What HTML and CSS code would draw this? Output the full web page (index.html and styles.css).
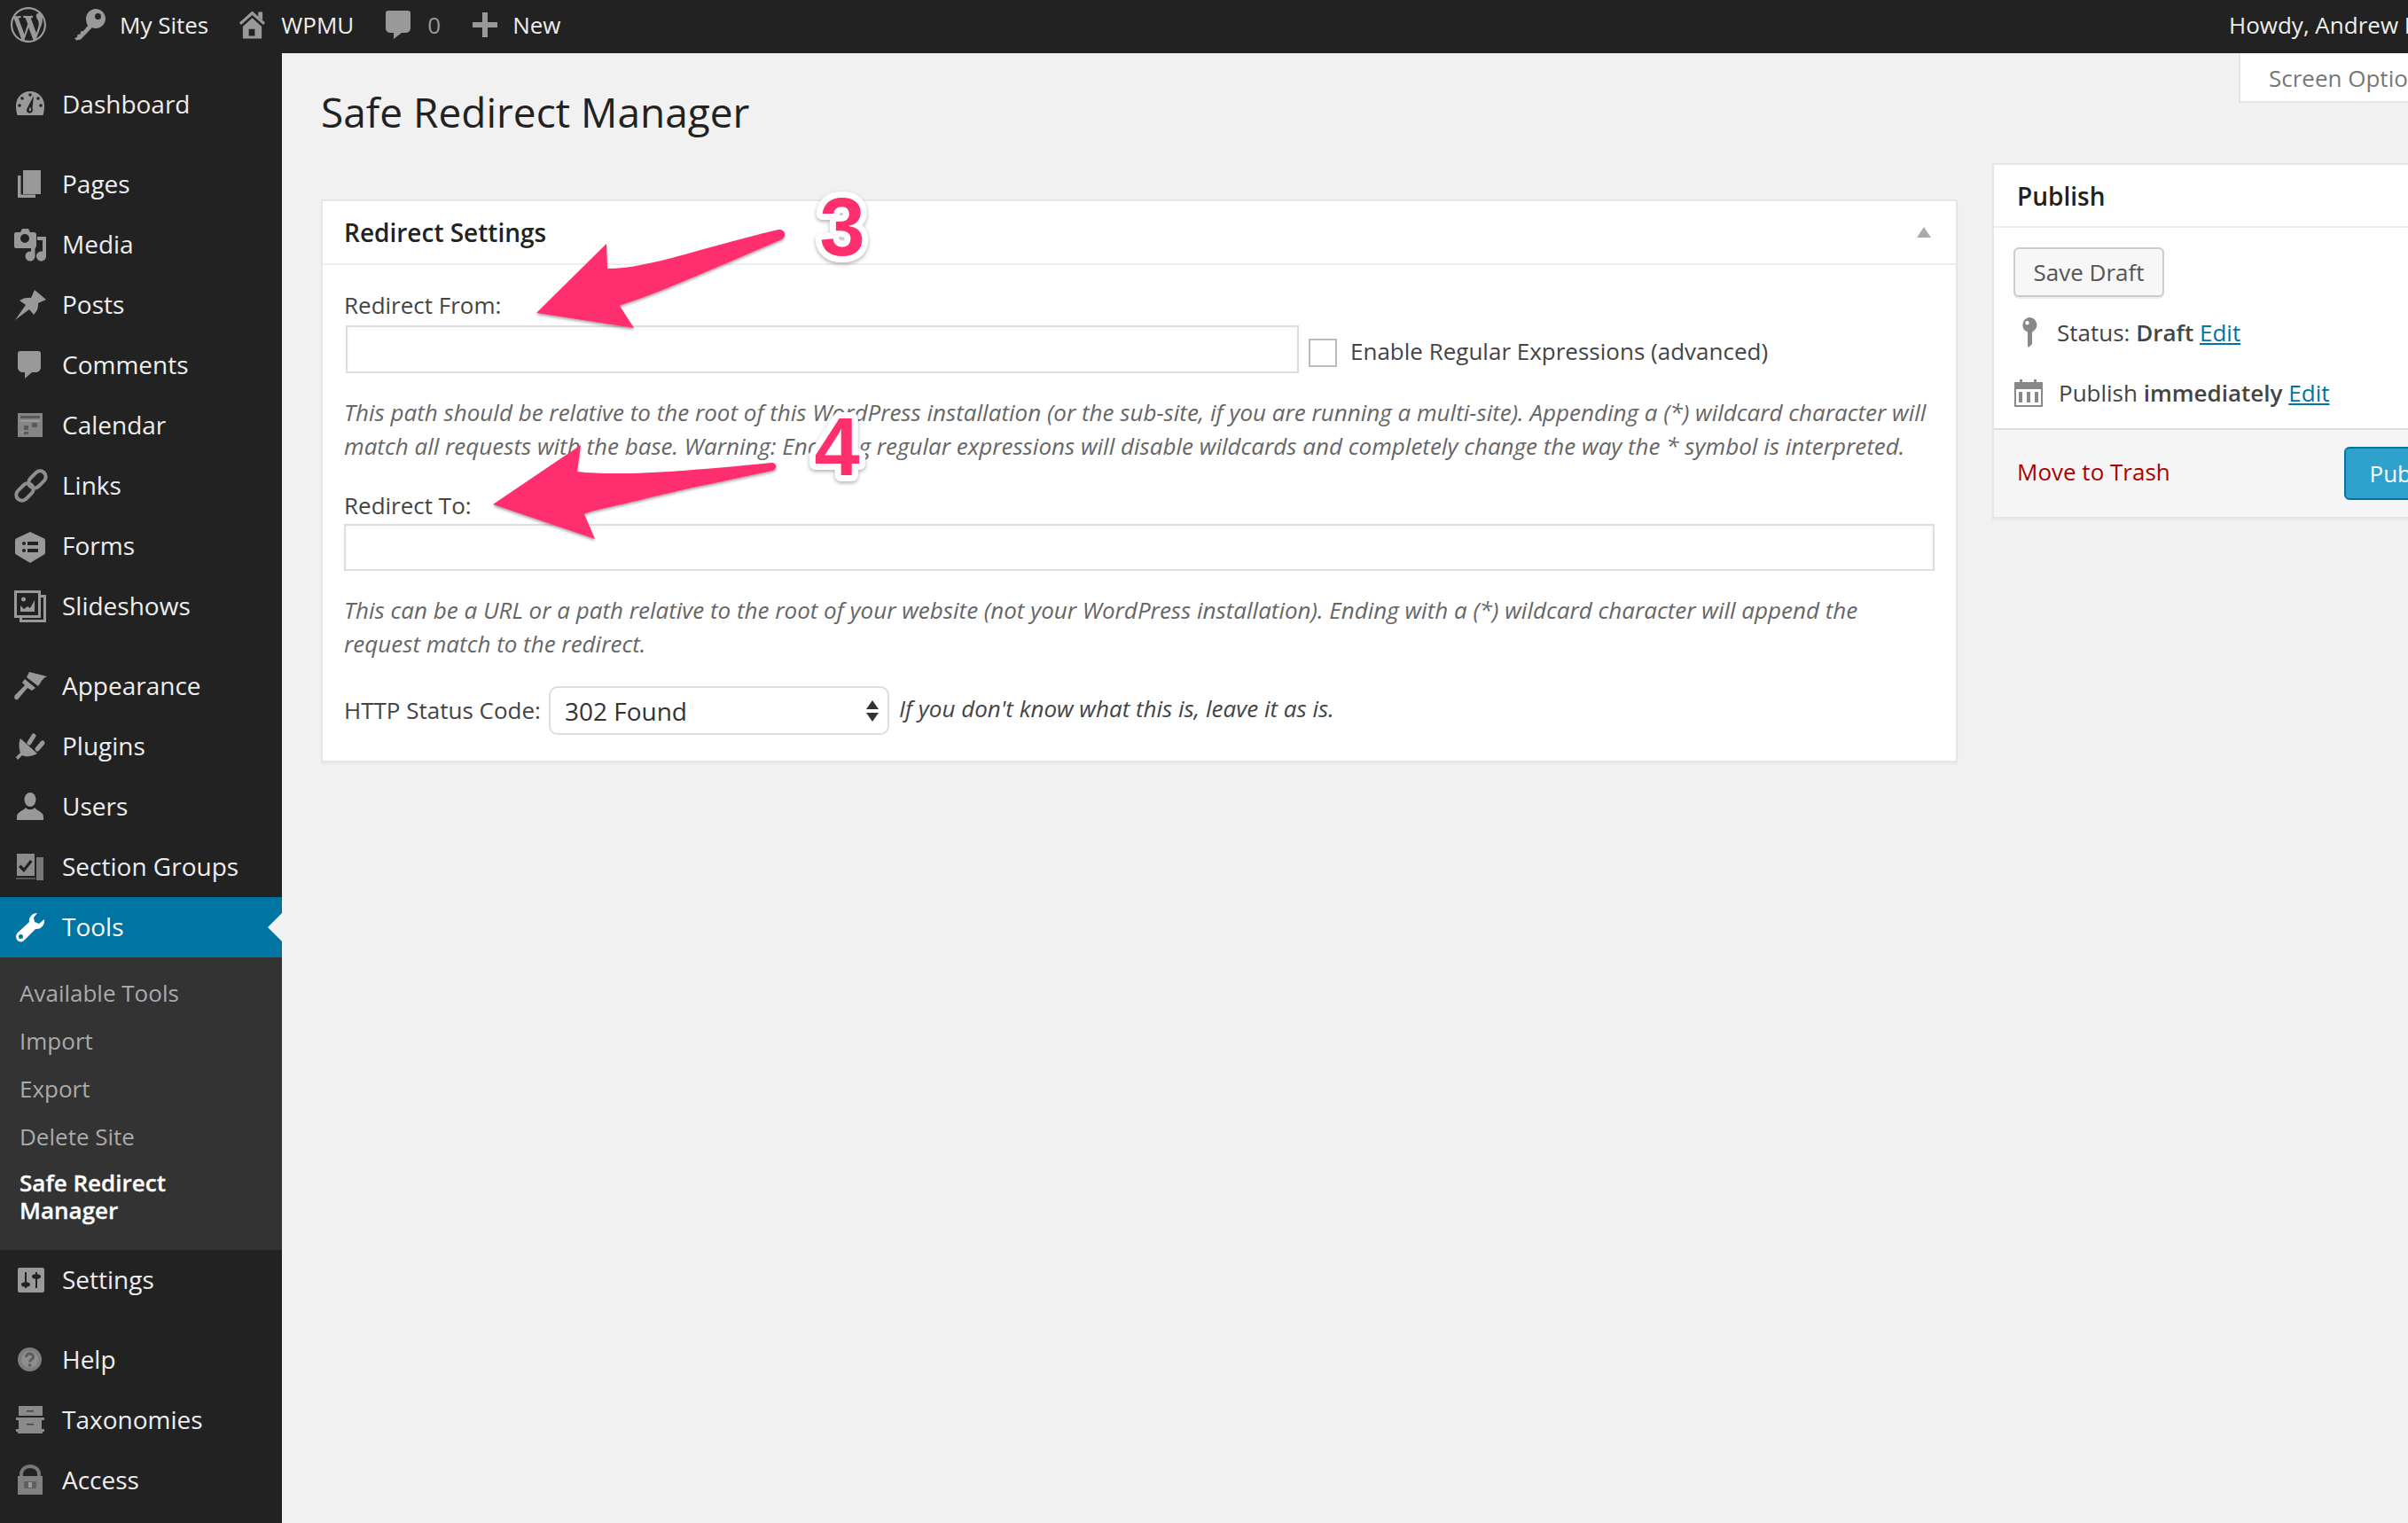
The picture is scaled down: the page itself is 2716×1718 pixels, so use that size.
FILE: index.html
```html
<!DOCTYPE html>
<html lang="en">
<head>
<meta charset="utf-8">
<title>Safe Redirect Manager</title>
<link rel="stylesheet" href="styles.css">
</head>
<body>
<header class="adminbar">
  <svg class="ab-wp" viewBox="0 0 20 20"><path fill="#999" d="M20 10c0-5.510-4.490-10-10-10C4.480 0 0 4.490 0 10c0 5.520 4.480 10 10 10 5.510 0 10-4.480 10-10zM7.780 15.370L4.370 6.220c.55-.02 1.170-.08 1.170-.08.5-.06.44-1.130-.06-1.110 0 0-1.450.11-2.370.11-.18 0-.37 0-.58-.01C4.120 2.690 6.870 1.110 10 1.110c2.330 0 4.450.87 6.050 2.340-.68-.11-1.650.39-1.650 1.580 0 .74.45 1.360.9 2.100.35.61.55 1.360.55 2.460 0 1.490-1.400 5-1.400 5l-3.030-8.370c.54-.02.82-.17.82-.17.5-.05.44-1.250-.06-1.220 0 0-1.440.12-2.380.12-.87 0-2.330-.12-2.330-.12-.5-.03-.56 1.200-.06 1.220l.92.08 1.260 3.410zM17.410 10c.24-.64.74-1.870.43-4.250.7 1.290 1.050 2.710 1.050 4.250 0 3.290-1.730 6.240-4.400 7.780.97-2.590 1.940-5.200 2.920-7.780zM6.100 18.090C3.120 16.650 1.110 13.530 1.110 10c0-1.300.23-2.480.72-3.590C3.250 10.300 4.670 14.200 6.100 18.090zm4.030-6.630l2.580 6.980c-.86.29-1.760.45-2.710.45-.79 0-1.570-.11-2.290-.33.81-2.380 1.620-4.740 2.420-7.100z"/></svg>
  <svg class="ab-ico ab-key" viewBox="0 0 36 36"><path fill="#999" d="M24 0c6 0 11 5 11 11s-5 11-11 11c-1.500 0-3-.3-4-1L7 34.500l-5 1L0 33l3-1 .5-3 3-.5.500-3 3-.5 5-6C13.500 16 13 13 13 11 13 5 18 0 24 0zm2.500 5a3.500 3.500 0 1 0 0 7 3.500 3.500 0 0 0 0-7z"/></svg>
  <a class="ab-text ab-sites">My Sites</a>
  <svg class="ab-ico ab-home" viewBox="0 0 30 32"><path fill="#999" fill-rule="evenodd" d="M15 0L30 13.500 28 16 15 4.500 2 16 0 13.500zM22 1h5v10l-5-4.500zM4 18L15 8l11 10v14H4zM11 21v8h7v-8z"/></svg>
  <a class="ab-text ab-wpmu">WPMU</a>
  <svg class="ab-ico ab-cmt" viewBox="0 0 28 32"><path fill="#999" d="M3 0h22a3 3 0 0 1 3 3v17c0 3-2.500 5-6 5h-4l-9 7v-7H6c-3.500 0-6-2-6-5V3a3 3 0 0 1 3-3z"/></svg>
  <span class="ab-zero">0</span>
  <svg class="ab-ico ab-plus" viewBox="0 0 28 28"><path fill="#999" d="M11 0h6v11h11v6H17v11h-6V17H0v-6h11z"/></svg>
  <a class="ab-text ab-new">New</a>
  <a class="ab-text ab-howdy">Howdy, Andrew Norcross</a>
</header>

<div class="layout">
  <nav class="sidebar">
    <ul class="menu">
      <li class="item"><svg class="ico" viewBox="0 0 40 40"><path d="M19 5C10 5 3 12 3 21c0 4 .5 8 1.500 11h29c1-3 1.500-7 1.500-11 0-9-7-16-16-16z"/><g fill="#222"><circle cx="19" cy="9" r="1.800"/><circle cx="10" cy="13" r="1.800"/><circle cx="28" cy="13" r="1.800"/><circle cx="7" cy="21" r="1.800"/><circle cx="31" cy="21" r="1.800"/><path d="M23 10l-1.500 14c1 2 .5 5-2.500 5.500s-5-2.500-3.500-5z"/></g><path d="M19.500 23l-1 .2-.9 3c0 1.500 2.300 1.500 2.500 0z"/></svg><span>Dashboard</span></li>
      <li class="item gap"><svg class="ico" viewBox="0 0 40 40"><path d="M11 4h20v27H11z"/><path d="M5 10h3.500v21.500H25V35H5z"/></svg><span>Pages</span></li>
      <li class="item"><svg class="ico" viewBox="0 0 40 40"><path fill-rule="evenodd" d="M3 6h5l2-4h7l2 4h4c2 0 3 1 3 3v12c0 2-1 3-3 3H3c-1.500 0-2-1-2-3V9c0-2 .5-3 2-3zm10 2a5 5 0 1 0 0 10 5 5 0 0 0 0-10z"/><path d="M27 11h10v22c0 3-2.500 5.500-5.500 5.500S26 36 26 33s2.500-5.500 5.500-5.500c.5 0 1 0 1.500.2V15h-6z"/><circle cx="19" cy="33" r="5.500"/><path d="M20 22h4.500v11H20z"/></svg><span>Media</span></li>
      <li class="item"><svg class="ico" viewBox="0 0 40 40"><path d="M24 3L37 14 28 18Q29 25 23 31L18 25 2 37 14 20 7 15Q13 11 20 12z"/></svg><span>Posts</span></li>
      <li class="item"><svg class="ico" viewBox="0 0 40 40"><path d="M8 4h20a3 3 0 0 1 3 3v15c0 4-3 6-6 6h-4l-8 7v-7h-2c-3 0-6-2-6-6V7a3 3 0 0 1 3-3z"/></svg><span>Comments</span></li>
      <li class="item"><svg class="ico" viewBox="0 0 40 40"><path fill="#858585" d="M5 6h28v27H5z"/><g fill="#5a5a5a"><path d="M8 9h22v3H8z"/><path d="M12 20h5v5h-5zM21 17h6v5h-6zM12 27h5v3h-5z"/></g><path fill="#a0a0a0" d="M8 14h22v1.500H8zM8 27h4v1H8z"/></svg><span>Calendar</span></li>
      <li class="item"><svg class="ico" viewBox="0 0 40 40"><g fill="none" stroke="#8f8f8f" stroke-width="4"><rect x="-11" y="-6.500" width="22" height="13" rx="6.500" transform="translate(27 13) rotate(-45)"/><rect x="-11" y="-6.500" width="22" height="13" rx="6.500" transform="translate(13 27) rotate(-45)"/></g></svg><span>Links</span></li>
      <li class="item"><svg class="ico" viewBox="0 0 40 40"><path d="M19 4l15 7c1.500.7 2 1.500 2 3v13c0 1.500-.5 2.300-2 3l-15 9-15-9c-1.500-.7-2-1.500-2-3V14c0-1.500.5-2.300 2-3z"/><g fill="#222"><circle cx="12" cy="17" r="2"/><circle cx="12" cy="25" r="2"/><path d="M16 15h12v4H16zM16 23h12v4H16z"/></g></svg><span>Forms</span></li>
      <li class="item"><svg class="ico" viewBox="0 0 40 40"><path fill-rule="evenodd" d="M1 2h30v5h6v31H7v-5H1zM4 5v25h24V5zM31 10v23H10v2h24V10z"/><path d="M6 7h20v21H6z" fill="#222"/><path d="M8 26v-7l4 4 4-3 3 2 5-9v13z" fill="#999"/><circle cx="11.500" cy="12" r="2.500" fill="#999"/></svg><span>Slideshows</span></li>
      <li class="item gap"><svg class="ico" viewBox="0 0 40 40"><path d="M18 4L38 9C33 11 31 16 28 20L15 10z"/><path d="M13 12L25 22 21 25 16 22 5 35C2 36 0 33 2 30L13 19 10 16z"/></svg><span>Appearance</span></li>
      <li class="item"><svg class="ico" viewBox="0 0 40 40"><path d="M8 11L27 28C20 32 14 32 10 30L5 35 3 32 8 27C6 22 6 15 8 11z"/><path d="M18 16L23 8M27 23L33 16" stroke="#999" stroke-width="5" stroke-linecap="round" fill="none"/></svg><span>Plugins</span></li>
      <li class="item"><svg class="ico" viewBox="0 0 40 40"><ellipse cx="19" cy="12" rx="6.500" ry="8"/><path d="M4 35v-4c0-5 8-7 10-10 2 3 8 3 10 0 2 3 10 5 10 10v4z"/></svg><span>Users</span></li>
      <li class="item"><svg class="ico" viewBox="0 0 40 40"><path d="M26 9h8v26h-8z" fill="#777"/><path d="M4 5h20v25H4z" fill="#8c8c8c"/><path d="M3 32h22v2H3z" fill="#555"/><path d="M6 20l2.500-2.500 3.500 3.500 7-9 2.500 2L12 26z" fill="#222"/></svg><span>Section Groups</span></li>
      <li class="item current"><svg class="ico" viewBox="0 0 40 40"><path fill="#fff" fill-rule="evenodd" d="M27 4C21 4 17 9 18 14L5 26C2 29 3 33 5 35 7 37 11 37 13 34L25 22C31 23 36 17 35 11L29 16 24 14 23 9zM8.500 28a2.500 2.500 0 1 0 0 5 2.500 2.500 0 0 0 0-5z"/></svg><span>Tools</span></li>
    </ul>
    <ul class="submenu">
      <li>Available Tools</li>
      <li>Import</li>
      <li>Export</li>
      <li>Delete Site</li>
      <li class="sub-current">Safe Redirect Manager</li>
    </ul>
    <ul class="menu">
      <li class="item"><svg class="ico" viewBox="0 0 40 40"><rect x="5" y="6" width="30" height="28" rx="2"/><path fill="none" stroke="#222" stroke-width="2" d="M14 11v18M26 11v18"/><ellipse cx="14" cy="25" rx="5" ry="2.800" fill="#222"/><ellipse cx="26" cy="16" rx="5" ry="2.800" fill="#222"/></svg><span>Settings</span></li>
      <li class="item gap"><svg class="ico" viewBox="0 0 40 40"><circle cx="18.500" cy="19.500" r="13.500" fill="#7d7d7d"/><circle cx="18.500" cy="19.500" r="9.500" fill="#8e8e8e"/><path fill="none" stroke="#5a5a5a" stroke-width="3" d="M14.500 17c0-5.500 8-5.500 8 0 0 2.500-4 2.500-4 5.500"/><circle cx="18.500" cy="26" r="1.800" fill="#5a5a5a"/></svg><span>Help</span></li>
      <li class="item"><svg class="ico" viewBox="0 0 40 40"><path d="M6 4h27v11H6z" fill="#8a8a8a"/><path d="M3 17h32v16H3zM5 33h28v2H5z" fill="#8a8a8a"/><path d="M3 20h3v10H3zM32 20h3v10h-3z" fill="#222"/><path d="M15 9h8v1.500h-8zM15 24h8v1.500h-8z" fill="#444"/></svg><span>Taxonomies</span></li>
      <li class="item"><svg class="ico" viewBox="0 0 40 40"><path d="M9 16V13C9 1 29 1 29 13v3" fill="none" stroke="#777" stroke-width="4"/><path d="M5 15h28v21H5z" fill="#808080"/><path d="M12 21h14v8H12z" fill="#5f5f5f"/><path d="M17 22h4v6h-4z" fill="#999"/></svg><span>Access</span></li>
    </ul>
  </nav>

  <main class="content">
    <a class="screen-options">Screen Options</a>
    <h1 class="title">Safe Redirect Manager</h1>
    <div class="columns">
      <section class="box main-box">
        <h2 class="box-head"><span>Redirect Settings</span><i class="toggle"></i></h2>
        <div class="box-body">
          <label class="label label-from">Redirect From:</label>
          <div class="from-row">
            <input class="input input-from" type="text">
            <span class="check"></span>
            <span class="check-label">Enable Regular Expressions (advanced)</span>
          </div>
          <p class="help help-from">This path should be relative to the root of this WordPress installation (or the sub-site, if you are running a multi-site). Appending a (*) wildcard character will match all requests with the base. Warning: Enabling regular expressions will disable wildcards and completely change the way the * symbol is interpreted.</p>
          <label class="label label-to">Redirect To:</label>
          <input class="input input-to" type="text">
          <p class="help help-to">This can be a URL or a path relative to the root of your website (not your WordPress installation). Ending with a (*) wildcard character will append the request match to the redirect.</p>
          <div class="status-row">
            <span class="status-label">HTTP Status Code:</span>
            <div class="select"><span>302 Found</span><i class="sel-arrows"></i></div>
            <em class="status-note">If you don't know what this is, leave it as is.</em>
          </div>
        </div>
      </section>
      <aside class="box side-box">
        <h2 class="side-head">Publish</h2>
        <div class="side-body">
          <button class="save-draft">Save Draft</button>
          <div class="pub-row status"><svg class="pin" viewBox="0 0 18 34"><path fill="#888" fill-rule="evenodd" d="M9 0a8.500 8.500 0 0 1 3 16.400V30l-4 4-1-2V16.400A8.500 8.500 0 0 1 9 0zM6.500 4a2.200 2.200 0 1 0 0 4.400 2.200 2.200 0 0 0 0-4.400z"/></svg><span>Status: <b>Draft</b> <a>Edit</a></span></div>
          <div class="pub-row sched"><svg class="cal" viewBox="0 0 32 32"><path fill="#888" fill-rule="evenodd" d="M0 4h6V1h3v3h13V1h3v3h7v28H0zM2 12v18h28V12z"/><path fill="#888" d="M5 15h4v12H5zM14 15h4v12h-4zM23 15h4v12h-4z"/></svg><span>Publish <b>immediately</b> <a>Edit</a></span></div>
        </div>
        <div class="side-foot"><a class="trash">Move to Trash</a><button class="publish">Publish</button></div>
      </aside>
    </div>
  </main>
</div>

<svg class="annot" viewBox="0 0 2716 1718" width="2716" height="1718">
  <defs><filter id="sh" x="-10%" y="-10%" width="120%" height="130%"><feDropShadow dx="0" dy="2" stdDeviation="1.500" flood-color="#000" flood-opacity=".35"/></filter></defs>
  <g fill="#ff2f6e" filter="url(#sh)">
    <path d="M605 353L684 275L685 303C730 303 790 280 878 259C885 258 888 266 882 270C840 288 790 310 740 330C720 338 705 342 699 345L715 370z"/>
    <path d="M556 569L655 502L651 532C700 538 790 530 870 522C877 522 877 530 871 531C830 540 770 552 730 562C695 571 670 575 659 580L671 608z"/>
  </g>
  <text class="num" x="950" y="288" text-anchor="middle">3</text>
  <text class="num" x="944" y="536" text-anchor="middle">4</text>
</svg>
</body>
</html>
```

FILE: styles.css
```css
* { box-sizing: border-box; }
html, body { margin: 0; padding: 0; }
body {
  width: 2716px;
  height: 1718px;
  overflow: hidden;
  position: relative;
  background: #f1f1f1;
  font-family: "Open Sans", sans-serif;
  font-size: 26px;
  color: #444;
}
ul { list-style: none; margin: 0; padding: 0; }

.adminbar {
  height: 60px;
  padding-bottom: 4px;
  background: #222;
  display: flex;
  align-items: center;
  font-size: 26px;
  color: #eee;
  overflow: hidden;
}
.ab-wp { width: 40px; height: 40px; margin-left: 12px; flex: none; }
.ab-ico { flex: none; }
.ab-key { width: 36px; height: 36px; margin-left: 32px; }
.ab-text { white-space: nowrap; flex: none; }
.ab-sites { margin-left: 15px; }
.ab-home { width: 29px; height: 32px; margin-left: 35px; }
.ab-wpmu { margin-left: 18px; }
.ab-cmt { width: 28px; height: 32px; margin-left: 36px; }
.ab-zero { color: #999; margin-left: 19px; flex: none; }
.ab-plus { width: 28px; height: 28px; margin-left: 36px; }
.ab-new { margin-left: 17px; }
.ab-howdy { margin-left: auto; width: 202px; overflow: hidden; }

.layout { display: flex; height: 1658px; }
.sidebar { width: 318px; flex: none; background: #222; padding-top: 24px; }
.item {
  height: 68px;
  display: flex;
  align-items: center;
  color: #eee;
  padding: 0 0 3px 70px;
  position: relative;
  font-size: 28px;
  white-space: nowrap;
}
.item.gap { margin-top: 22px; }
.ico {
  position: absolute;
  left: 15px;
  top: 14px;
  width: 40px;
  height: 40px;
  fill: #999;
}
.current { background: #0074a2; color: #fff; }
.current::after {
  content: "";
  position: absolute;
  right: 0;
  top: 50%;
  margin-top: -16px;
  border: 16px solid transparent;
  border-left: 0;
  border-right-color: #f1f1f1;
}
.submenu {
  height: 330px;
  background: #333;
  padding: 14px 0 0 22px;
  font-size: 26px;
  color: #aaa;
}
.submenu li { padding: 8px 0 10px; width: 260px; line-height: 36px; height: 54px; }
.submenu .sub-current { color: #fff; font-weight: 600; line-height: 31px; height: auto; padding-top: 9px; -webkit-text-stroke: .3px #fff; }

.content { flex: 1; position: relative; min-width: 0; padding-left: 44px; overflow: hidden; }
.screen-options {
  position: absolute;
  top: 0;
  left: 2207px;
  width: 300px;
  height: 56px;
  background: #fff;
  border: 2px solid #e5e5e5;
  border-top: 0;
  padding: 10px 0 0 32px;
  font-size: 26px;
  line-height: 36px;
  color: #777;
  white-space: nowrap;
}
.title {
  margin: 0;
  font-size: 46px;
  font-weight: 400;
  line-height: 64px;
  color: #222;
  padding-top: 34px;
  height: 124px;
}
.columns { display: flex; align-items: flex-start; }
.box { background: #fff; border: 2px solid #e5e5e5; box-shadow: 0 2px 2px rgba(0,0,0,.04); }
.main-box { width: 1846px; height: 635px; margin-top: 41px; flex: none; }
.box-head {
  margin: 0;
  height: 72px;
  border-bottom: 2px solid #eee;
  display: flex;
  align-items: center;
  justify-content: space-between;
  padding: 0 28px 0 24px;
  font-size: 28px;
  font-weight: 600;
  color: #222;
}
.toggle {
  width: 0;
  height: 0;
  border: 8px solid transparent;
  border-top: 0;
  border-bottom: 12px solid #aaa;
}
.box-body { padding: 26px 24px 0; position: relative; }
.label { display: block; line-height: 38px; color: #444; }
.from-row { display: flex; align-items: center; margin: 4px 0 0 2px; height: 54px; }
.input {
  display: block;
  height: 54px;
  background: #fff;
  border: 2px solid #ddd;
  box-shadow: inset 0 2px 4px rgba(0,0,0,.04);
  outline: 0;
  border-radius: 0;
  padding: 0;
}
.input-from { width: 1075px; flex: none; }
.check {
  width: 32px;
  height: 32px;
  border: 2px solid #bbb;
  margin: 8px 0 0 11px;
  flex: none;
  background: #fff;
}
.check-label { margin: 4px 0 0 15px; white-space: nowrap; }
.help {
  margin: 0;
  font-style: italic;
  line-height: 38px;
  color: #666;
}
.help-from { margin-top: 25px; width: 1790px; }
.label-to { margin-top: 29px; }
.input-to { width: 1794px; margin-top: 2px; height: 53px; }
.help-to { margin-top: 25px; width: 1780px; }
.status-row { display: flex; align-items: center; margin-top: 28px; height: 55px; }
.status-label { white-space: nowrap; }
.select {
  width: 384px;
  height: 55px;
  margin: 2px 0 0 9px;
  border: 2px solid #ddd;
  border-radius: 10px;
  background: #fff;
  padding-left: 16px;
  font-size: 28px;
  color: #333;
  display: flex;
  align-items: center;
  justify-content: space-between;
  flex: none;
}
.sel-arrows {
  width: 14px;
  height: 24px;
  margin-right: 10px;
  position: relative;
}
.sel-arrows::before, .sel-arrows::after {
  content: "";
  position: absolute;
  left: 0;
  border: 7px solid transparent;
}
.sel-arrows::before { top: 0; border-top: 0; border-bottom: 10px solid #333; }
.sel-arrows::after { bottom: 0; border-bottom: 0; border-top: 10px solid #333; }
.status-note { margin: -4px 0 0 11px; white-space: nowrap; color: #444; }

.side-box { width: 560px; height: 401px; margin: 0 0 0 39px; flex: none; }
.side-head {
  margin: 0;
  height: 71px;
  border-bottom: 2px solid #eee;
  font-size: 28px;
  font-weight: 600;
  color: #222;
  padding-left: 26px;
  line-height: 70px;
}
.side-body { height: 226px; padding: 22px 0 0 22px; position: relative; }
.save-draft {
  display: block;
  width: 170px;
  height: 56px;
  border: 2px solid #ccc;
  border-radius: 6px;
  background: #f7f7f7;
  box-shadow: 0 2px 0 rgba(0,0,0,.08);
  font: 400 26px "Open Sans", sans-serif;
  color: #555;
  padding: 0;
}
.pub-row { display: flex; align-items: center; white-space: nowrap; position: relative; font-size: 26px; }
.pub-row.status { margin-top: 18px; height: 44px; padding-left: 49px; }
.pub-row.sched { margin-top: 24px; height: 44px; padding-left: 51px; }
.pub-row b { font-weight: 600; }
.pub-row a { color: #0074a2; text-decoration: underline; }
.pin { position: absolute; left: 9px; top: 5px; width: 18px; height: 34px; }
.cal { position: absolute; left: 1px; top: 6px; width: 32px; height: 32px; }
.side-foot {
  height: 100px;
  background: #f5f5f5;
  border-top: 2px solid #ddd;
  display: flex;
  align-items: center;
  justify-content: space-between;
  padding: 0 0 0 26px;
  overflow: hidden;
}
.trash { color: #a00; font-size: 26px; margin-bottom: 4px; }
.publish {
  width: 146px;
  height: 60px;
  margin-right: 15px;
  background: #2ea2cc;
  border: 2px solid #0074a2;
  border-radius: 6px;
  color: #fff;
  font: 400 26px "Open Sans", sans-serif;
  padding: 0;
  flex: none;
}

.annot { position: absolute; left: 0; top: 0; pointer-events: none; }
.num {
  font-family: "Liberation Sans", sans-serif;
  font-weight: 700;
  font-size: 92px;
  fill: #ff2f6e;
  stroke: #fff;
  stroke-width: 14px;
  stroke-linejoin: round;
  paint-order: stroke fill;
  filter: drop-shadow(0 2px 2px rgba(0,0,0,.3));
}
```
